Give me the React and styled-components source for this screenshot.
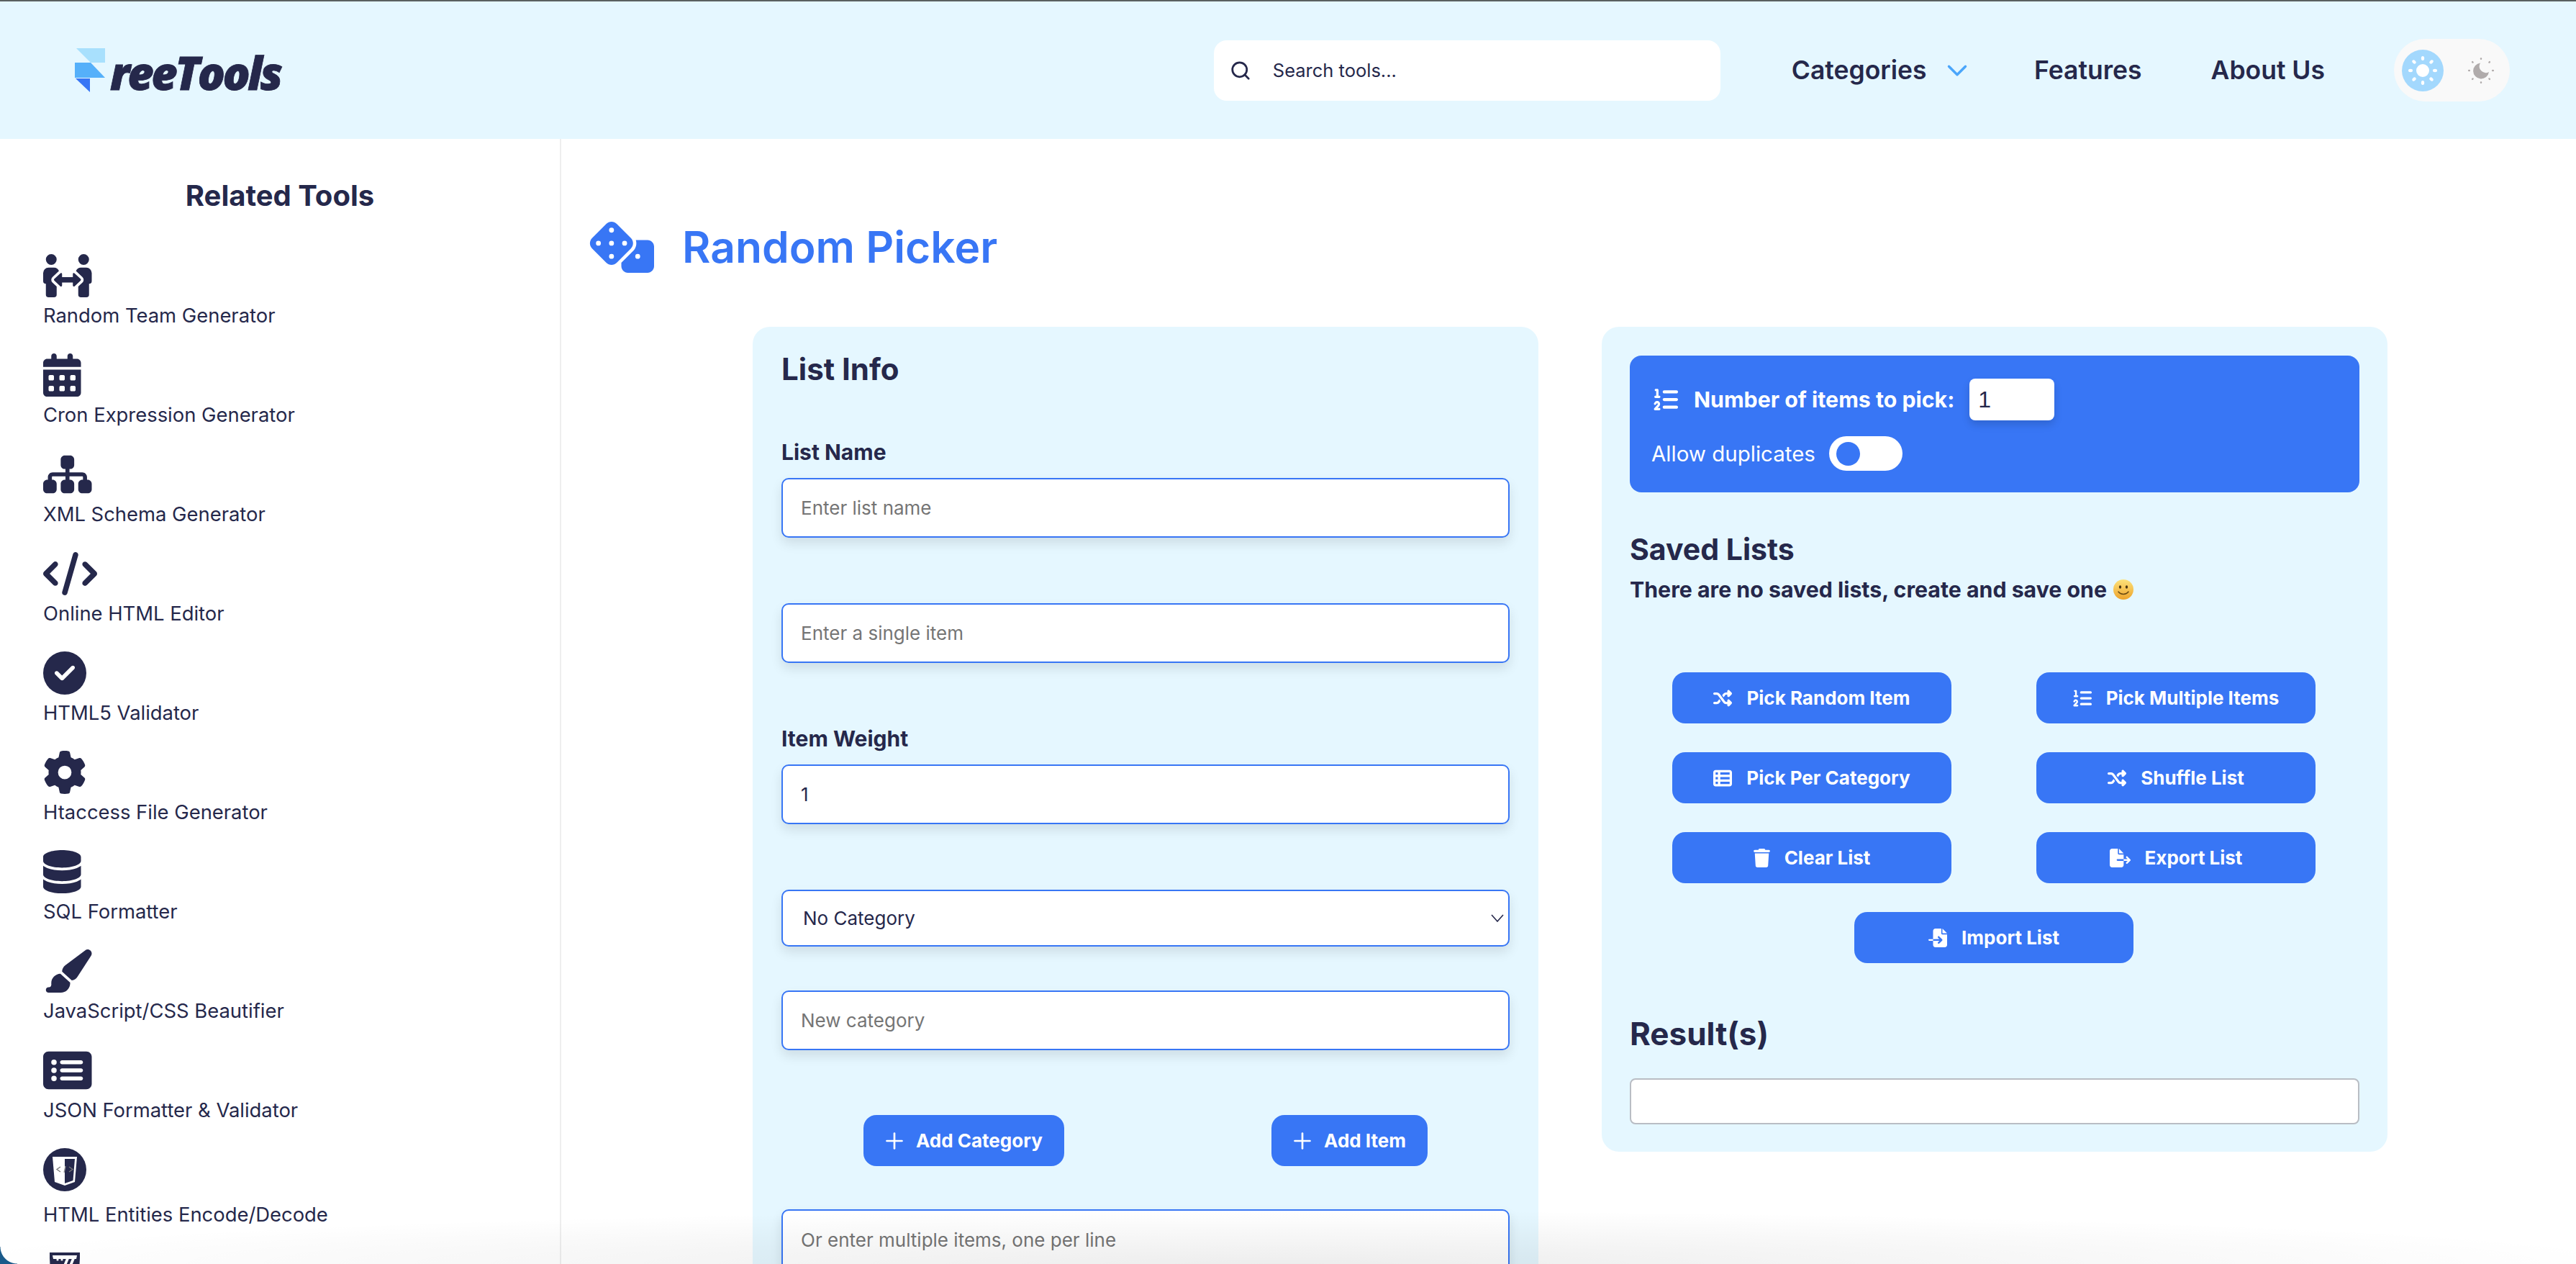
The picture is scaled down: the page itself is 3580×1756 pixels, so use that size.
import React from "react";
import styled, { createGlobalStyle } from "styled-components";
import { FaPeopleArrows } from "react-icons/fa";
import {
  FaCalendarDays,
  FaSitemap,
  FaCode,
  FaCircleCheck,
  FaGear,
  FaDatabase,
  FaPaintbrush,
  FaRectangleList,
  FaDice,
  FaListOl,
  FaShuffle,
  FaTableList,
  FaTrash,
  FaFileExport,
  FaFileImport,
} from "react-icons/fa6";
import { Search, ChevronDown, Plus } from "lucide-react";

const NAVY = "#25284b";
const BLUE = "#3876f5";
const PALE = "#e5f7ff";
const FONT = `Inter, "Noto Sans", "Liberation Sans", sans-serif`;

const selectArrow = `url("data:image/svg+xml,%3Csvg xmlns='http://www.w3.org/2000/svg' width='18' height='11' viewBox='0 0 18 11'%3E%3Cpath d='M1 1l8 9 8-9' fill='none' stroke='%2325284b' stroke-width='1.6'/%3E%3C/svg%3E")`;

const GlobalStyle = createGlobalStyle`
  html, body {
    margin: 0;
    height: 100%;
    overflow: hidden;
    background: #fff;
  }
  * {
    box-sizing: border-box;
  }
  body {
    font-family: ${FONT};
    color: ${NAVY};
  }
`;

const HtmlEntitiesIcon = () => (
  <svg viewBox="0 0 60 67">
    <circle cx="30" cy="30" r="30" fill={NAVY} />
    <path d="M13 12h34l-3 35-14 5-14-5z" fill="#fff" />
    <path d="M30 15h14l-2.500 30-11.500 4z" fill={NAVY} />
    <path d="M24 26l-5 3.500 5 3.500M36 26l5 3.500-5 3.500" fill="none" stroke="#777" strokeWidth="1.300" />
    <path d="M31 25l-2 9" stroke="#999" strokeWidth="1.300" />
  </svg>
);

const StripedShieldIcon = () => (
  <svg viewBox="0 0 60 60">
    <path d="M9 0h42v8l-3 52H12L9 8z" fill={NAVY} />
    <path d="M13 4h34l-1 5H14z" fill="#fff" />
    <circle cx="20" cy="10" r="1.600" fill="#fff" />
    <circle cx="26" cy="10" r="1.600" fill="#fff" />
    <path d="M33 6h4l-5 12h-4zM41 6h4l-5 12h-4z" fill="#fff" />
  </svg>
);

const tools = [
  { name: "Random Team Generator", Icon: FaPeopleArrows, width: 67.5 },
  { name: "Cron Expression Generator", Icon: FaCalendarDays, width: 52.5 },
  { name: "XML Schema Generator", Icon: FaSitemap, width: 67.5 },
  { name: "Online HTML Editor", Icon: FaCode, width: 75 },
  { name: "HTML5 Validator", Icon: FaCircleCheck, width: 60 },
  { name: "Htaccess File Generator", Icon: FaGear, width: 60 },
  { name: "SQL Formatter", Icon: FaDatabase, width: 52.5 },
  { name: "JavaScript/CSS Beautifier", Icon: FaPaintbrush, width: 67.5 },
  { name: "JSON Formatter & Validator", Icon: FaRectangleList, width: 67.5 },
  { name: "HTML Entities Encode/Decode", Icon: HtmlEntitiesIcon, width: 60, tall: true },
  { name: "", Icon: StripedShieldIcon, width: 60 },
];

const actions = [
  { label: "Pick Random Item", Icon: FaShuffle, width: 26 },
  { label: "Pick Multiple Items", Icon: FaListOl, width: 26 },
  { label: "Pick Per Category", Icon: FaTableList, width: 26 },
  { label: "Shuffle List", Icon: FaShuffle, width: 26 },
  { label: "Clear List", Icon: FaTrash, width: 23 },
  { label: "Export List", Icon: FaFileExport, width: 29 },
  { label: "Import List", Icon: FaFileImport, width: 26, wide: true },
];

const sunRays = [0, 45, 90, 135, 180, 225, 270, 315];

const SunIcon = () => (
  <svg viewBox="0 0 58 58">
    <circle cx="29" cy="29" r="29" fill="#a3d8fd" />
    <circle cx="29" cy="29" r="9" fill="#fff" />
    {sunRays.map((deg) => (
      <ellipse key={deg} cx="29" cy="12" rx="2.200" ry="3" fill="#fff" transform={`rotate(${deg} 29 29)`} />
    ))}
  </svg>
);

const MoonIcon = () => (
  <svg viewBox="0 0 40 40">
    <path d="M19 9.500A11 11 0 1 0 31 22A9 9 0 0 1 19 9.500Z" fill="#b0abab" />
    {sunRays.map((deg) => (
      <ellipse key={deg} cx="20" cy="3.500" rx="1.200" ry="1.600" fill="#b0abab" transform={`rotate(${deg} 20 20)`} />
    ))}
  </svg>
);

const SmileEmoji = () => (
  <EmojiSvg viewBox="0 0 30 30">
    <defs>
      <linearGradient id="faceFill" x1="0" y1="0" x2="0" y2="1">
        <stop offset="0" stopColor="#fde27a" />
        <stop offset="1" stopColor="#eda32c" />
      </linearGradient>
    </defs>
    <circle cx="15" cy="15" r="14" fill="url(#faceFill)" />
    <ellipse cx="10.500" cy="11.500" rx="1.600" ry="2.300" fill="#4a3510" />
    <ellipse cx="19.500" cy="11.500" rx="1.600" ry="2.300" fill="#4a3510" />
    <path d="M8 18c3 4.500 11 4.500 14 0" fill="none" stroke="#6a4a12" strokeWidth="1.500" strokeLinecap="round" />
  </EmojiSvg>
);

const App = () => {
  return (
    <Page>
      <GlobalStyle />
      <Header>
        <LogoLink>
          <svg viewBox="0 0 44 64" width="44" height="64">
            <path d="M2 0h40v20H22z" fill="#a8e0fd" />
            <path d="M0 20h22l20 21H0z" fill="#55b0fa" />
            <path d="M1 42h20v19z" fill="#3876f5" />
          </svg>
          <LogoText>reeTools</LogoText>
        </LogoLink>
        <SearchBox>
          <Search size={30} strokeWidth={2.2} color={NAVY} />
          <SearchInput placeholder="Search tools..." />
        </SearchBox>
        <Nav>
          <NavItem>
            Categories
            <ChevronDown size={46} strokeWidth={1.8} color="#4ba6fb" />
          </NavItem>
          <NavItem>Features</NavItem>
          <NavItem>About Us</NavItem>
        </Nav>
        <ThemeSwitch>
          <SunIcon />
          <MoonIcon />
        </ThemeSwitch>
      </Header>

      <Body>
        <Sidebar>
          <SidebarTitle>Related Tools</SidebarTitle>
          <ToolList>
            {tools.map(({ name, Icon, tall, width }) => (
              <ToolItem key={name} $tall={tall} $iconWidth={width}>
                <Icon />
                <span>{name}</span>
              </ToolItem>
            ))}
          </ToolList>
        </Sidebar>

        <Main>
          <PageTitle>
            <FaDice />
            <h1>Random Picker</h1>
          </PageTitle>
          <Columns>
            <Card>
              <CardTitle>List Info</CardTitle>
              <FieldLabel $top={73}>List Name</FieldLabel>
              <TextField placeholder="Enter list name" />
              <TextField $top={91} placeholder="Enter a single item" />
              <FieldLabel $top={87}>Item Weight</FieldLabel>
              <TextField defaultValue="1" />
              <SelectField>
                <option>No Category</option>
              </SelectField>
              <TextField $top={61} placeholder="New category" />
              <AddRow>
                <AddButton>
                  <Plus size={36} strokeWidth={1.8} />
                  Add Category
                </AddButton>
                <AddButton>
                  <Plus size={36} strokeWidth={1.8} />
                  Add Item
                </AddButton>
              </AddRow>
              <TextArea placeholder="Or enter multiple items, one per line" />
            </Card>

            <ShortCard>
              <PickBox>
                <PickRow>
                  <FaListOl />
                  <PickLabel>Number of items to pick:</PickLabel>
                  <CountInput defaultValue="1" />
                </PickRow>
                <DuplicatesRow>
                  Allow duplicates
                  <Toggle>
                    <ToggleKnob />
                  </Toggle>
                </DuplicatesRow>
              </PickBox>
              <SavedTitle>Saved Lists</SavedTitle>
              <SavedNote>
                There are no saved lists, create and save one <SmileEmoji />
              </SavedNote>
              <ActionGrid>
                {actions.map(({ label, Icon, wide, width }) => (
                  <GridButton key={label} $wide={wide} $iconWidth={width}>
                    <Icon />
                    {label}
                  </GridButton>
                ))}
              </ActionGrid>
              <ResultTitle>Result(s)</ResultTitle>
              <ResultField />
            </ShortCard>
          </Columns>
        </Main>
      </Body>

      <BottomShade />
      <ScreenCorner />
    </Page>
  );
};

const Page = styled.div`
  width: 100%;
  height: 100vh;
  overflow: hidden;
  position: relative;
  display: flex;
  flex-direction: column;
`;

const Header = styled.header`
  height: 193px;
  flex: none;
  display: flex;
  align-items: center;
  background: ${PALE};
  border-top: 2px solid #5a6060;
  padding: 0 92px 0 104px;
`;

const LogoLink = styled.a`
  display: flex;
  align-items: flex-start;
  height: 64px;
  margin-top: 2px;
`;

const LogoText = styled.span`
  font-family: "Open Sans", sans-serif;
  font-size: 63px;
  font-weight: 800;
  font-style: italic;
  line-height: 66px;
  letter-spacing: -3.4px;
  margin: 1px 0 0 5px;
  color: ${NAVY};
  -webkit-text-stroke: 0.8px ${NAVY};
`;

const SearchBox = styled.div`
  width: 704px;
  height: 84px;
  margin-left: auto;
  display: flex;
  align-items: center;
  gap: 28px;
  padding-left: 22px;
  background: #fff;
  border-radius: 18px;
`;

const SearchInput = styled.input`
  flex: 1;
  border: 0;
  outline: 0;
  background: none;
  font-family: ${FONT};
  font-size: 25.5px;
  color: ${NAVY};
  &::placeholder {
    color: ${NAVY};
    opacity: 1;
  }
`;

const Nav = styled.nav`
  display: flex;
  align-items: center;
  gap: 96px;
  margin: 0 96px 0 99px;
`;

const NavItem = styled.a`
  display: flex;
  align-items: center;
  gap: 19px;
  height: 46px;
  font-size: 35.5px;
  font-weight: 600;
  line-height: 40px;
  svg {
    margin-right: -11.5px;
  }
`;

const ThemeSwitch = styled.div`
  width: 161px;
  height: 87px;
  display: flex;
  align-items: center;
  gap: 32px;
  padding-left: 11px;
  border-radius: 44px;
  background: #f9f9f9;
  svg:first-child {
    width: 58px;
    height: 58px;
  }
  svg:last-child {
    width: 40px;
    height: 40px;
  }
`;

const Body = styled.div`
  flex: 1;
  display: flex;
  min-height: 0;
`;

const Sidebar = styled.aside`
  width: 780px;
  flex: none;
  padding-top: 55px;
  border-right: 2px solid #eeeeee;
`;

const SidebarTitle = styled.h2`
  margin: 0 0 57px;
  font-size: 40px;
  line-height: 48px;
  font-weight: 700;
  text-align: center;
`;

const ToolList = styled.ul`
  list-style: none;
  margin: 0;
  padding: 0 0 0 60px;
  display: flex;
  flex-direction: column;
`;

const ToolItem = styled.li`
  display: flex;
  flex-direction: column;
  align-items: flex-start;
  height: ${(p) => (p.$tall ? 145 : 138)}px;
  font-size: 27.4px;
  line-height: 34px;
  svg {
    flex: none;
    width: ${(p) => p.$iconWidth}px;
    height: ${(p) => (p.$tall ? 67 : 60)}px;
    color: ${NAVY};
    margin-bottom: 8px;
  }
`;

const Main = styled.main`
  flex: 1;
  min-width: 0;
  padding: 113px 0 0 38px;
`;

const PageTitle = styled.div`
  display: flex;
  align-items: center;
  gap: 39px;
  height: 73px;
  color: ${BLUE};
  svg {
    width: 91px;
    height: 73px;
  }
  h1 {
    margin: 0;
    font-size: 60.5px;
    line-height: 72px;
    font-weight: 600;
  }
`;

const Columns = styled.div`
  display: flex;
  align-items: flex-start;
  gap: 88px;
  margin: 75px 0 0 228px;
`;

const Card = styled.section`
  width: 1092px;
  padding: 35px 40px 40px;
  border-radius: 24px;
  background: ${PALE};
  display: flex;
  flex-direction: column;
  align-items: stretch;
`;

const ShortCard = styled(Card)`
  padding: 40px 39px 38px;
`;

const CardTitle = styled.h3`
  margin: 0;
  font-size: 42px;
  line-height: 48px;
  font-weight: 700;
`;

const FieldLabel = styled.label`
  display: block;
  margin: ${(p) => p.$top}px 0 18px;
  font-size: 30px;
  line-height: 36px;
  font-weight: 700;
`;

const TextField = styled.input`
  display: block;
  width: 100%;
  height: 83px;
  margin-top: ${(p) => p.$top || 0}px;
  padding: 0 25px;
  border: 2px solid ${BLUE};
  border-radius: 10px;
  background: #fff;
  outline: 0;
  box-shadow: 0 8px 16px rgba(0, 0, 0, 0.1);
  font-family: ${FONT};
  font-size: 26px;
  color: ${NAVY};
  &::placeholder {
    color: #757575;
    opacity: 1;
  }
`;

const SelectField = styled.select`
  display: block;
  width: 100%;
  height: 79px;
  margin-top: 91px;
  padding: 0 28px;
  border: 2px solid ${BLUE};
  border-radius: 10px;
  appearance: none;
  background: #fff ${selectArrow} no-repeat right 6px center;
  box-shadow: 0 8px 16px rgba(0, 0, 0, 0.1);
  font-family: ${FONT};
  font-size: 26px;
  color: ${NAVY};
`;

const AddRow = styled.div`
  display: flex;
  justify-content: space-between;
  padding: 0 114px;
  margin-top: 90px;
`;

const ActionButton = styled.button`
  height: 71px;
  display: flex;
  align-items: center;
  justify-content: center;
  border: 0;
  border-radius: 18px;
  background: ${BLUE};
  color: #fff;
  font-family: ${FONT};
  font-size: 26px;
  font-weight: 700;
`;

const AddButton = styled(ActionButton)`
  padding: 0 30px 0 25px;
  gap: 12px;
`;

const TextArea = styled.textarea`
  display: block;
  width: 100%;
  height: 200px;
  margin-top: 60px;
  padding: 25px;
  border: 2px solid ${BLUE};
  border-radius: 10px;
  background: #fff;
  outline: 0;
  resize: none;
  box-shadow: 0 8px 16px rgba(0, 0, 0, 0.1);
  font-family: ${FONT};
  font-size: 26px;
  &::placeholder {
    color: #757575;
    opacity: 1;
  }
`;

const PickBox = styled.div`
  height: 190px;
  padding: 32px 32px 0 30px;
  border-radius: 16px;
  background: ${BLUE};
  color: #fff;
`;

const PickRow = styled.div`
  display: flex;
  align-items: center;
  height: 58px;
  svg {
    width: 34px;
    height: 34px;
    margin-left: 3px;
  }
`;

const PickLabel = styled.span`
  margin: 0 21px 0 22px;
  font-size: 30.3px;
  font-weight: 700;
`;

const CountInput = styled.input`
  width: 118px;
  height: 58px;
  padding: 0 12px;
  border: 0;
  border-radius: 8px;
  outline: 0;
  background: #fff;
  box-shadow: 0 6px 12px rgba(0, 0, 0, 0.14);
  font-family: "Liberation Sans", sans-serif;
  font-size: 32px;
  color: ${NAVY};
`;

const DuplicatesRow = styled.div`
  display: flex;
  align-items: center;
  gap: 19px;
  margin-top: 22px;
  font-size: 29.5px;
`;

const Toggle = styled.div`
  width: 102px;
  height: 48px;
  padding: 7.5px 10px;
  border-radius: 24px;
  background: #fff;
`;

const ToggleKnob = styled.div`
  width: 33px;
  height: 33px;
  border-radius: 50%;
  background: ${BLUE};
`;

const SavedTitle = styled.h3`
  margin: 55px 0 0;
  font-size: 41px;
  line-height: 48px;
  font-weight: 700;
`;

const SavedNote = styled.p`
  display: flex;
  align-items: center;
  gap: 8px;
  margin: 11px 0 0;
  font-size: 30.3px;
  line-height: 42px;
  font-weight: 700;
`;

const EmojiSvg = styled.svg`
  width: 30px;
  height: 30px;
`;

const ActionGrid = styled.div`
  display: grid;
  grid-template-columns: 388px 388px;
  justify-content: space-between;
  row-gap: 40px;
  padding: 0 61px 0 59px;
  margin-top: 94px;
`;

const GridButton = styled(ActionButton)`
  width: 388px;
  gap: 20px;
  grid-column: ${(p) => (p.$wide ? "1 / span 2" : "auto")};
  justify-self: center;
  svg {
    width: ${(p) => p.$iconWidth}px;
    height: 26px;
  }
`;

const ResultTitle = styled.h3`
  margin: 74px 0 0;
  font-size: 44px;
  line-height: 48px;
  font-weight: 700;
`;

const ResultField = styled.div`
  height: 64px;
  margin-top: 38px;
  border: 2px solid #b9bdc4;
  border-radius: 8px;
  background: #fff;
`;

const BottomShade = styled.div`
  position: absolute;
  left: 0;
  right: 0;
  bottom: 0;
  height: 80px;
  pointer-events: none;
  background: radial-gradient(ellipse 1900px 75px at 50% 100%, rgba(0, 0, 0, 0.07), rgba(0, 0, 0, 0));
`;

const ScreenCorner = styled.div`
  position: absolute;
  left: 0;
  bottom: 0;
  width: 24px;
  height: 24px;
  pointer-events: none;
  background: radial-gradient(circle 24px at 100% 0, rgba(0, 0, 0, 0) 23px, #1a5a8a 24px);
`;

export default App;
